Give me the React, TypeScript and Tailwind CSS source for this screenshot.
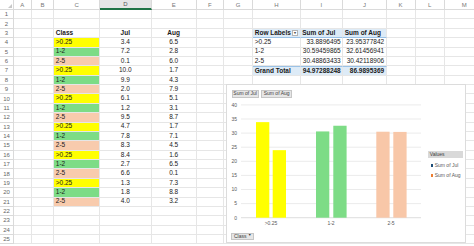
import React from "react";

const COLS = ["A", "B", "C", "D", "E", "F", "G", "H", "I", "J", "K", "L", "M"];

type Cls = ">0.25" | "1-2" | "2-5";

const data: [Cls, string, string][] = [
  [">0.25", "3.4", "6.5"],
  ["1-2", "7.2", "2.8"],
  ["2-5", "0.1", "6.0"],
  [">0.25", "10.0", "1.7"],
  ["1-2", "9.9", "4.3"],
  ["2-5", "2.0", "7.9"],
  [">0.25", "6.1", "5.1"],
  ["1-2", "1.2", "3.1"],
  ["2-5", "9.5", "8.7"],
  [">0.25", "4.7", "1.7"],
  ["1-2", "7.8", "7.1"],
  ["2-5", "8.3", "4.5"],
  [">0.25", "8.4", "1.6"],
  ["1-2", "2.7", "6.5"],
  ["2-5", "6.6", "0.1"],
  [">0.25", "1.3", "7.3"],
  ["1-2", "1.8", "8.8"],
  ["2-5", "4.0", "3.2"],
];

const classBg: Record<Cls, string> = {
  ">0.25": "bg-[#ffff00]",
  "1-2": "bg-[#7ddc86]",
  "2-5": "bg-[#f8cbad]",
};

const pivot = [
  [">0.25", "33.8896495", "23.95377842"],
  ["1-2", "30.59459865", "32.61456941"],
  ["2-5", "30.48863433", "30.42118906"],
];

const cellBase = "border-r border-b border-[#e6e6e6] flex items-center overflow-hidden whitespace-nowrap px-[1.5px]";

function Cell({ row, col }: { row: number; col: string }) {
  // table A (C..E), rows 3..21
  if (row === 3 && col === "C") return <div className={`${cellBase} font-bold`}>Class</div>;
  if (row === 3 && col === "D") return <div className={`${cellBase} justify-center font-bold`}>Jul</div>;
  if (row === 3 && col === "E") return <div className={`${cellBase} justify-center font-bold`}>Aug</div>;
  if (row >= 4 && row <= 21) {
    const d = data[row - 4];
    if (col === "C") return <div className={`${cellBase} ${classBg[d[0]]}`}>{d[0]}</div>;
    if (col === "D") return <div className={`${cellBase} justify-center`}>{d[1]}</div>;
    if (col === "E") return <div className={`${cellBase} justify-center`}>{d[2]}</div>;
  }
  // pivot table H..J, rows 3..7
  if (row === 3 && col === "H")
    return (
      <div className={`${cellBase} bg-[#ddebf7] border-b-[#9bc2e6] font-bold justify-between`}>
        <span>Row Labels</span>
        <span className="w-[6px] h-[6px] bg-white border border-[#b4b4b4] flex items-center justify-center text-[4px] text-[#555]">▾</span>
      </div>
    );
  if (row === 3 && col === "I") return <div className={`${cellBase} bg-[#ddebf7] border-b-[#9bc2e6] font-bold`}>Sum of Jul</div>;
  if (row === 3 && col === "J") return <div className={`${cellBase} bg-[#ddebf7] border-b-[#9bc2e6] font-bold`}>Sum of Aug</div>;
  if (row >= 4 && row <= 6) {
    const p = pivot[row - 4];
    if (col === "H") return <div className={cellBase}>{p[0]}</div>;
    if (col === "I") return <div className={`${cellBase} justify-end`}>{p[1]}</div>;
    if (col === "J") return <div className={`${cellBase} justify-end`}>{p[2]}</div>;
  }
  if (row === 7 && col === "H")
    return <div className={`${cellBase} bg-[#ddebf7] border-t border-t-[#9bc2e6] font-bold`}>Grand Total</div>;
  if (row === 7 && col === "I")
    return <div className={`${cellBase} bg-[#ddebf7] border-t border-t-[#9bc2e6] font-bold justify-end`}>94.97288248</div>;
  if (row === 7 && col === "J")
    return <div className={`${cellBase} bg-[#ddebf7] border-t border-t-[#9bc2e6] font-bold justify-end`}>86.9895369</div>;
  return <div className={cellBase} />;
}

const bars = [
  { x: 29, w: 13.3, v: 33.89, c: "#ffff00" },
  { x: 45.7, w: 13.3, v: 23.95, c: "#ffff00" },
  { x: 89, w: 13.3, v: 30.59, c: "#7ddc86" },
  { x: 106.3, w: 13.3, v: 32.61, c: "#7ddc86" },
  { x: 149.3, w: 13.3, v: 30.49, c: "#f8c7a8" },
  { x: 166.3, w: 13.3, v: 30.42, c: "#f8c7a8" },
];

function Chart() {
  const y = (v: number) => 118.7 - v * 2.82;
  return (
    <div className="absolute left-[226px] top-[84px] w-[240px] h-[159px] bg-white border border-[#dcdcdc] flex flex-col text-[5px] text-[#595959]">
      <div className="flex gap-[2.7px] pl-[4.5px] pt-[4.5px] h-[14px]">
        <div className="h-[8px] w-[27.3px] bg-[#e6e6e6] border border-[#c6c6c6] flex items-center justify-center text-[#404040]">Sum of Jul</div>
        <div className="h-[8px] w-[30.3px] bg-[#e6e6e6] border border-[#c6c6c6] flex items-center justify-center text-[#404040]">Sum of Aug</div>
      </div>
      <div className="flex h-[132px]">
        <svg width="200" height="132" className="shrink-0" fontFamily="Liberation Sans, Arial, sans-serif" fontSize="5">
          {[0, 5, 10, 15, 20, 25, 30, 35, 40].map((v) => (
            <g key={v}>
              <line x1="14" x2="194" y1={y(v)} y2={y(v)} stroke={v === 0 ? "#d0d0d0" : "#e2e2e2"} strokeWidth="0.7" />
              <text x="10" y={y(v) + 1.8} textAnchor="end" fill="#595959">{v}</text>
            </g>
          ))}
          {bars.map((b, i) => (
            <rect key={i} x={b.x} y={y(b.v)} width={b.w} height={b.v * 2.82} fill={b.c} />
          ))}
          <text x="44" y="126" textAnchor="middle" fill="#595959">&gt;0.25</text>
          <text x="104" y="126" textAnchor="middle" fill="#595959">1-2</text>
          <text x="164" y="126" textAnchor="middle" fill="#595959">2-5</text>
        </svg>
        <div className="flex flex-col pt-[52px] pl-[0.7px]">
          <div className="w-[35.6px] h-[7.3px] bg-[#d9d9d9] flex items-center pl-[2px] text-[#404040]">Values</div>
          <div className="flex items-center gap-[1.5px] pl-[3px] mt-[3.5px] h-[7px]">
            <span className="w-[2.5px] h-[2.5px] bg-[#1f4e79]" />
            <span>Sum of Jul</span>
          </div>
          <div className="flex items-center gap-[1.5px] pl-[3px] mt-[3px] h-[7px]">
            <span className="w-[2.5px] h-[2.5px] bg-[#ed7d31]" />
            <span>Sum of Aug</span>
          </div>
        </div>
      </div>
      <div className="pl-[4px] pt-[1.5px]">
        <div className="h-[7.3px] w-[23.3px] bg-[#e6e6e6] border border-[#c6c6c6] flex items-center justify-center gap-[1.5px] text-[#404040]">
          <span>Class</span>
          <span className="text-[3.5px]">▼</span>
        </div>
      </div>
    </div>
  );
}

export default function App() {
  const rows = Array.from({ length: 25 }, (_, i) => i + 1);
  return (
    <div
      className="relative w-[474px] h-[246px] overflow-hidden bg-white text-[#1a1a1a] text-[6.5px] leading-none"
      style={{ fontFamily: "'Liberation Sans', Arial, sans-serif" }}
    >
      <div className="grid grid-cols-[14px_17.7px_22.6px_45.7px_51.7px_45px_27.3px_29.3px_47.4px_42.6px_43.4px_29px_29px_40px] grid-rows-[10px_repeat(25,9.375px)]">
        <div className="border-r border-b border-[#dadada] bg-white flex items-end justify-end p-[1px]">
          <span className="w-0 h-0 border-l-[4px] border-l-transparent border-b-[4px] border-b-[#c8c8c8]" />
        </div>
        {COLS.map((c) =>
          c === "D" ? (
            <div key={c} className="bg-[#e6e6e6] border-r border-[#dadada] border-b-2 border-b-[#217346] flex items-center justify-center text-[#555] text-[6px]">{c}</div>
          ) : (
            <div key={c} className="bg-white border-r border-b border-[#dadada] flex items-center justify-center text-[#777] text-[6px]">{c}</div>
          )
        )}
        {rows.map((r) => (
          <React.Fragment key={r}>
            <div className="bg-white border-r border-b border-[#dadada] flex items-center justify-center text-[#666] text-[6px]">{r}</div>
            {COLS.map((c) => (
              <Cell key={c} row={r} col={c} />
            ))}
          </React.Fragment>
        ))}
      </div>
      <Chart />
    </div>
  );
}
